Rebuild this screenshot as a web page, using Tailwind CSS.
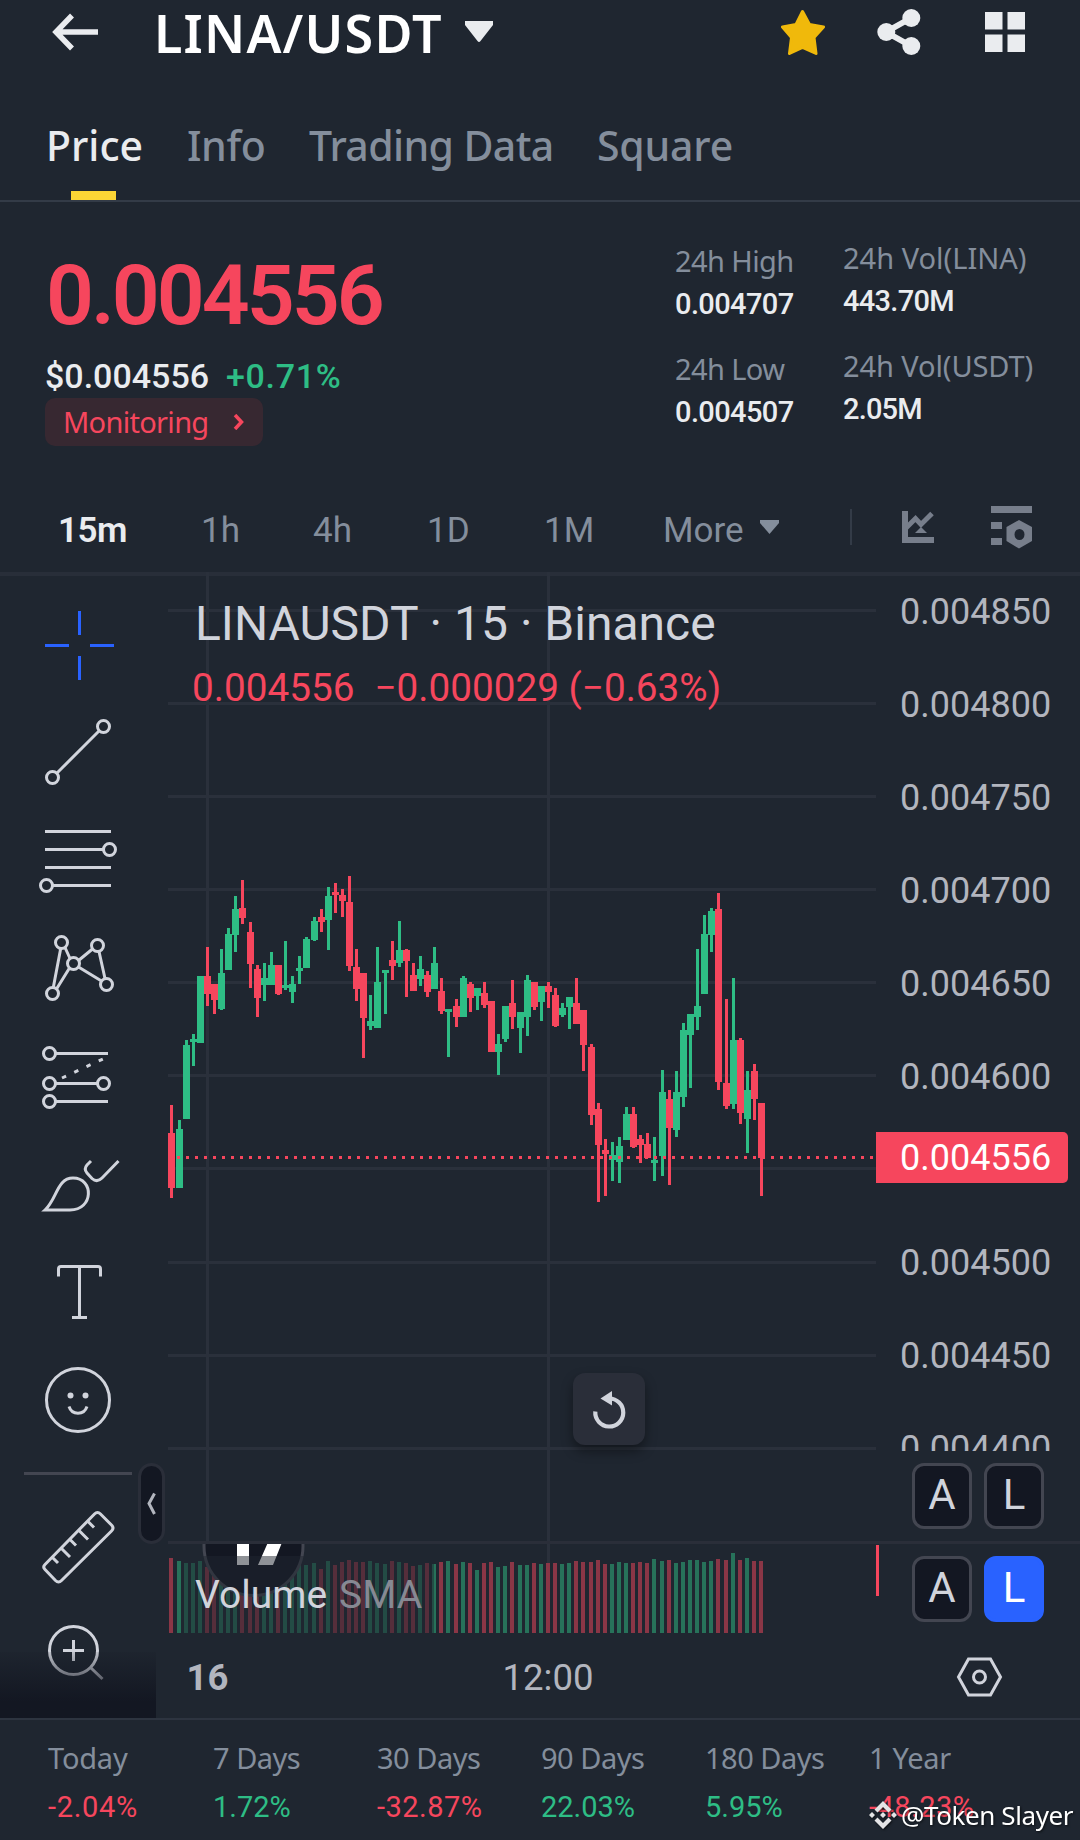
<!DOCTYPE html>
<html lang="en">
<head>
  <meta charset="UTF-8" />
  <title>LINA/USDT</title>
  <script src="https://cdn.jsdelivr.net/npm/@tailwindcss/browser@4"></script>
</head>
<body class="bg-[#1f2630] w-[1080px] h-[1840px] overflow-hidden font-['Roboto',sans-serif] text-[#eaecef] whitespace-nowrap">

  <!-- Header -->
  <header class="h-[68px] flex items-center font-['Noto_Sans',sans-serif]">
    <svg class="ml-[50px] w-[50px] h-[50px] -mt-1" viewBox="50 7 50 50" fill="none" stroke="#eaecef" stroke-width="5.5">
      <path d="M98 32H57M72 15.500L56 32L72 48.500" />
    </svg>
    <h1 class="ml-[54px] -mt-[2px] w-[292px] text-[52px] leading-[68px] font-semibold text-white tracking-[1.2px]">LINA/USDT</h1>
    <svg class="ml-[19px] w-[28px] h-[22px] -mt-1" viewBox="0 0 28 22" fill="#eaecef"><path d="M0 0H28V4L15.500 20Q14 22 12.500 20L0 4Z" /></svg>
    <svg class="ml-[288px] w-[44px] h-[46px] -mt-1" viewBox="781 9 44 46" fill="#f0b90b" stroke="#f0b90b" stroke-width="3" stroke-linejoin="round">
      <path d="M802.500 11.500L809.500 24.500L823.500 27L814 37.500L816 53.500L802.500 47.500L789.500 53.500L791.500 37.500L782.500 27L796 24.500Z" />
    </svg>
    <svg class="ml-[52px] w-[44px] h-[46px] -mt-1" viewBox="877 9 44 46" fill="#eaecef">
      <circle cx="886.300" cy="32" r="9" /><circle cx="911.300" cy="18" r="9" /><circle cx="911.300" cy="46" r="9" />
      <path d="M911 18L886 32L911 46" fill="none" stroke="#eaecef" stroke-width="6" />
    </svg>
    <svg class="ml-[64px] w-[40px] h-[40px] -mt-1" viewBox="0 0 40 40" fill="#eaecef">
      <path d="M0 0H17.500V17.500H0ZM22.500 0H40V17.500H22.500ZM0 22.500H17.500V40H0ZM22.500 22.500H40V40H22.500Z" />
    </svg>
  </header>

  <!-- Tabs -->
  <nav class="relative h-[134px] border-b-2 border-[#333b47] pl-[46px] grid grid-cols-[141px_122px_288px_160px] font-['Noto_Sans',sans-serif] text-[41px] leading-[56px] pt-[49px] font-medium text-[#848e9c]">
    <span class="text-[#eaecef]">Price</span>
    <span class="tracking-[-0.4px]">Info</span>
    <span class="tracking-[-0.6px]">Trading Data</span>
    <span class="tracking-[-0.2px]">Square</span>
    <i class="absolute left-[71px] bottom-0 w-[45px] h-[9px] bg-[#fcd535]"></i>
  </nav>

  <!-- Ticker -->
  <section class="h-[284px] flex">
    <div class="w-[676px] pt-[52px] pl-[45px]">
      <div class="pl-[1px] text-[84px] leading-[84px] font-semibold text-[#f6465d] tracking-[-3px]">0.004556</div>
      <div class="mt-4 h-[44px] text-[34px] leading-[44px] font-medium flex">
        <span class="w-[181px]">$0.004556</span>
        <span class="text-[#2ebd85] tracking-[0.7px]">+0.71%</span>
      </div>
      <div class="w-[218px] h-[48px] rounded-[10px] bg-[#372831] text-[#f6465d] pl-[18px] flex items-center font-['Noto_Sans',sans-serif] text-[29px] tracking-[-0.7px]">
        <span class="w-[170px]">Monitoring</span>
        <svg class="w-[11px] h-[16px]" viewBox="0 0 11 16" fill="none" stroke="#f6465d" stroke-width="3.500"><path d="M2 1L8.500 8L2 15" /></svg>
      </div>
    </div>
    <div class="w-[168px] pt-[41px] text-[29px] leading-[36px] tracking-[-0.6px]">
      <div class="-ml-px font-['Noto_Sans',sans-serif] text-[#848e9c]">24h High</div>
      <div class="mt-[7px] -ml-px font-medium">0.004707</div>
      <div class="mt-[29px] -ml-px font-['Noto_Sans',sans-serif] text-[#848e9c]">24h Low</div>
      <div class="mt-[7px] -ml-px font-medium">0.004507</div>
    </div>
    <div class="pt-[38px] -ml-px text-[29px] leading-[36px]">
      <div class="font-['Noto_Sans',sans-serif] text-[#848e9c]">24h Vol(LINA)</div>
      <div class="mt-[7px] font-medium tracking-[-0.7px]">443.70M</div>
      <div class="mt-[29px] font-['Noto_Sans',sans-serif] text-[#848e9c] tracking-[-0.1px]">24h Vol(USDT)</div>
      <div class="mt-[7px] font-medium tracking-[-0.8px]">2.05M</div>
    </div>
  </section>

  <!-- Intervals -->
  <nav class="h-[90px] border-b-4 border-[#282e39] pl-[58px] flex items-center text-[35px] leading-[44px] text-[#848e9c]">
    <span class="mt-1 w-[143px] font-semibold text-[#eaecef] tracking-[-0.5px]">15m</span>
    <span class="mt-1 w-[112px]">1h</span>
    <span class="mt-1 w-[114px]">4h</span>
    <span class="mt-1 w-[117px]">1D</span>
    <span class="mt-1 w-[119px]">1M</span>
    <span class="mt-1 w-[97px]">More</span>
    <svg class="w-[19px] h-[14px] -mt-1" viewBox="0 0 19 14" fill="#848e9c"><path d="M0 0H19V3L9.500 14L0 3Z" /></svg>
    <i class="ml-[71px] w-[2px] h-[36px] bg-[#333b47] -mt-1"></i>
    <svg class="ml-[50px] w-[32px] h-[32px] -mt-1" viewBox="0 0 32 32" fill="#777e8b">
      <path d="M0 0H6V26H32V32H0Z" /><path d="M13 22L19 16L25 22Z" />
      <path d="M4 17L13.500 7.500L19 13.500L30 2.500" fill="none" stroke="#777e8b" stroke-width="5" />
    </svg>
    <svg class="ml-[57px] w-[41px] h-[43px] -mt-[3px]" viewBox="0 0 41 43" fill="#777e8b">
      <path d="M0 0H41V7H0ZM0 16H11V23H0ZM0 32H11V39H0Z" />
      <path fill-rule="evenodd" d="M28 14L41 21V35L28 42.500L15.500 35V21ZM28.500 23A5 5.500 0 1 0 28.500 34A5 5.500 0 1 0 28.500 23Z" />
    </svg>
  </nav>

  <!-- Chart -->
  <section class="h-[1142px] flex">

    <!-- Drawing tools -->
    <aside class="relative w-[168px] h-[1142px] pt-4 overflow-hidden">
      <svg class="block w-[156px] h-[108px]" viewBox="0 592 156 108" stroke="#2962ff" stroke-width="3"><path d="M45 645.500H69M90 645.500H114M79.500 611V635M79.500 656V680" /></svg>
      <svg class="block w-[156px] h-[108px]" viewBox="0 700 156 108" fill="none" stroke="#d1d4dc" stroke-width="3">
        <circle cx="52.500" cy="777.500" r="6" /><circle cx="103.500" cy="726.500" r="6" /><path d="M57 773L99 731" />
      </svg>
      <svg class="block w-[156px] h-[108px]" viewBox="0 808 156 108" fill="none" stroke="#d1d4dc" stroke-width="3">
        <path d="M45 831.500H111M45 849.500H103M45 867.500H111M53 885.500H111" /><circle cx="109.500" cy="849.500" r="6" /><circle cx="46.500" cy="885.500" r="6" />
      </svg>
      <svg class="block w-[156px] h-[108px]" viewBox="0 916 156 108" fill="none" stroke="#d1d4dc" stroke-width="3">
        <path d="M60.700 948.500L53.300 987.500M65 947.500L70 958.500M56.500 989L69.500 968M78.500 960.500L92.500 949M99 951.500L105 978.500M78.500 967L101.500 981" />
        <circle cx="61.500" cy="942.500" r="6" /><circle cx="97.500" cy="945.500" r="6" /><circle cx="73.500" cy="963.500" r="6" /><circle cx="106.500" cy="984.500" r="6" /><circle cx="52.500" cy="993.500" r="6" />
      </svg>
      <svg class="block w-[156px] h-[108px]" viewBox="0 1024 156 108" fill="none" stroke="#d1d4dc" stroke-width="3">
        <circle cx="49.500" cy="1053.500" r="6" /><circle cx="49.500" cy="1083.500" r="6" /><circle cx="103.500" cy="1083.500" r="6" /><circle cx="49.500" cy="1101.500" r="6" />
        <path d="M56 1053.500H108M56 1083.500H97M56 1101.500H108" /><path d="M62 1078L104 1058.500" stroke-dasharray="4.500 9" />
      </svg>
      <svg class="block w-[156px] h-[108px]" viewBox="0 1132 156 108" fill="none" stroke="#d1d4dc" stroke-width="3">
        <path d="M45 1210C57 1199 57 1178 73 1178C94 1178 94 1210 70 1210Z" /><path d="M91 1161L87 1165Q83.500 1169 87 1173L92 1178.500Q97 1183 102 1178L118.500 1161" />
      </svg>
      <svg class="block w-[156px] h-[108px]" viewBox="0 1240 156 108" fill="none" stroke="#d1d4dc" stroke-width="3">
        <path d="M58.500 1276.500V1269Q58.500 1266.500 61 1266.500H98Q100.500 1266.500 100.500 1269V1276.500M79.500 1266V1317M72 1317.500H87" />
      </svg>
      <svg class="block w-[156px] h-[108px]" viewBox="0 1348 156 108" fill="none" stroke="#d1d4dc" stroke-width="3">
        <circle cx="78" cy="1400" r="31.500" /><path d="M69 1406.500C72 1415.500 84 1415.500 87 1406.500" />
        <g fill="#d1d4dc" stroke="none"><circle cx="70.500" cy="1395.500" r="3" /><circle cx="85.500" cy="1395.500" r="3" /></g>
      </svg>
      <hr class="mt-4 ml-6 w-[108px] border-0 h-[3px] bg-[#434651]" />
      <svg class="block mt-[15px] w-[156px] h-[108px]" viewBox="0 1490 156 108" fill="none" stroke="#d1d4dc" stroke-width="3">
        <path d="M45 1564.500L94.500 1514Q97.500 1511 100.500 1514L111.500 1525Q114.500 1528 111.500 1531L61.500 1580.500Q58.500 1583.500 55.500 1580.500L45 1569.500Q42.500 1567 45 1564.500Z" />
        <path d="M52 1557L58 1563M61 1548L70 1557M70 1539.500L76 1545.500M79 1530.500L88 1539.500M88 1521.500L94 1527.500" />
      </svg>
      <svg class="block w-[156px] h-[108px]" viewBox="0 1598 156 108" fill="none" stroke="#d1d4dc" stroke-width="3">
        <circle cx="73.500" cy="1650.500" r="24" /><path d="M63 1650.500H84M73.500 1640V1661M91 1668L102.500 1679" />
      </svg>
      <div class="absolute left-0 bottom-0 w-[156px] h-[66px] bg-linear-to-b from-[#131722]/10 to-[#131722] to-75%"></div>
      <div class="absolute left-[138px] top-[887px] w-[27px] h-[81px] rounded-full border-3 border-[#2a2e39] bg-[#131722]">
        <svg class="w-[21px] h-[75px]" viewBox="141 1466 21 75" fill="none" stroke="#b2b5be" stroke-width="3"><path d="M154.500 1493.500L149 1503.500L154.500 1514" /></svg>
      </div>
    </aside>

    <div class="relative w-[912px]">
      <svg id="chart" class="absolute left-0 top-0 w-[912px] h-[1067px] overflow-visible" viewBox="168 576 912 1067" shape-rendering="crispEdges"></svg>

      <div class="relative h-[1067px] flex">
        <!-- Plot with legends -->
        <div class="w-[708px] pt-[20px] pl-[27px]">
          <div class="text-[48px] leading-[56px] text-[#d1d4dc]">LINAUSDT · 15 · Binance</div>
          <div class="mt-[8px] -ml-[3px] text-[38.7px] leading-[56px] text-[#f6465d] flex gap-[20px]"><span>0.004556</span><span>−0.000029 (−0.63%)</span></div>
          <button class="block mt-[657px] ml-[378px] w-[72px] h-[72px] rounded-xl bg-[#2a2e39] shadow-[0_6px_12px_rgba(0,0,0,0.4)]">
            <svg class="w-[72px] h-[72px]" viewBox="573 1373 72 72">
              <path d="M595.300 1411.500A14 14 0 1 0 609 1398.500" fill="none" stroke="#d1d4dc" stroke-width="4.200" /><path d="M600.500 1398.500L612 1391V1405.500Z" fill="#d1d4dc" />
            </svg>
          </button>
          <div class="mt-[127px] text-[39px] leading-[46px] text-[#d1d4dc] flex gap-[12px]"><span>Volume</span><span class="text-[#868993]">SMA</span></div>
        </div>

        <!-- Price scale -->
        <div class="relative w-[204px] text-[#b2b5be] text-[36px]">
          <div id="scale" class="h-[875px] overflow-hidden pl-[24px]"></div>
          <div class="absolute left-0 top-[556px] w-[192px] h-[51px] rounded-r-[5px] bg-[#f6465d] text-white pl-[24px] leading-[53px]">0.004556</div>
          <div class="mt-3 pl-9 grid grid-cols-[60px_60px] gap-x-3 gap-y-[27px] text-[42px] text-[#d1d4dc] text-center leading-[57px]">
            <button class="h-[66px] pb-[3px] rounded-xl border-3 border-[#434651] bg-[#131722]">A</button>
            <button class="h-[66px] pb-[3px] rounded-xl border-3 border-[#434651] bg-[#131722]">L</button>
            <button class="h-[66px] pb-[3px] rounded-xl border-3 border-[#434651] bg-[#131722]">A</button>
            <button class="h-[66px] pb-[3px] rounded-xl border-3 border-[#2962ff] bg-[#2962ff] text-white">L</button>
          </div>
        </div>
      </div>

      <!-- Time scale -->
      <div class="h-[69px] flex items-center text-[36.5px] text-[#b2b5be]">
        <span class="mt-[2px] w-[79px] text-center font-bold">16</span>
        <span class="mt-[2px] ml-[216px] w-[170px] text-center">12:00</span>
        <svg class="ml-[322px] w-[48px] h-[42px] -mt-[2px]" viewBox="955 1656.500 48 42" fill="none" stroke="#d1d4dc" stroke-width="3">
          <path d="M968.500 1659.500H990.500L1000.500 1677.500L990.500 1695.500H968.500L958.500 1677.500Z" /><circle cx="979.500" cy="1677.500" r="6" />
        </svg>
      </div>
    </div>
  </section>

  <!-- Performance -->
  <footer class="relative h-[122px] border-t-2 border-[#2d3440] pt-[18px] pl-[48px] grid grid-cols-[165px_164px_164px_164px_164px_180px] auto-rows-[49px] text-[29px] leading-[40px]">
    <span class="font-['Noto_Sans',sans-serif] text-[#848e9c] tracking-[-0.2px]">Today</span>
    <span class="font-['Noto_Sans',sans-serif] text-[#848e9c] tracking-[-0.5px]">7 Days</span>
    <span class="font-['Noto_Sans',sans-serif] text-[#848e9c] tracking-[-0.5px]">30 Days</span>
    <span class="font-['Noto_Sans',sans-serif] text-[#848e9c] tracking-[-0.5px]">90 Days</span>
    <span class="font-['Noto_Sans',sans-serif] text-[#848e9c] tracking-[-0.5px]">180 Days</span>
    <span class="font-['Noto_Sans',sans-serif] text-[#848e9c] tracking-[-0.3px]">1 Year</span>
    <span class="text-[#f6465d] tracking-[0.7px]">-2.04%</span>
    <span class="text-[#2ebd85]">1.72%</span>
    <span class="text-[#f6465d] tracking-[0.5px]">-32.87%</span>
    <span class="text-[#2ebd85]">22.03%</span>
    <span class="text-[#2ebd85]">5.95%</span>
    <span class="text-[#f6465d] tracking-[0.5px]">-48.23%</span>
    <div class="absolute left-[869px] top-[77px] flex items-center gap-[4px] font-['Noto_Sans',sans-serif] text-[26px] leading-[36px] tracking-[-0.4px] text-white drop-shadow-[1px_1px_1px_rgba(0,0,0,0.6)]">
      <svg class="w-[28px] h-[28px]" viewBox="0 0 28 28" fill="#e4e4e6">
        <path d="M14 0L22.500 8.500L19.500 11.500L14 6L8.500 11.500L5.500 8.500ZM14 28L22.500 19.500L19.500 16.500L14 22L8.500 16.500L5.500 19.500ZM14 11L17 14L14 17L11 14ZM3 11L6 14L3 17L0 14ZM25 11L28 14L25 17L22 14Z" />
      </svg>
      <span>@Token Slayer</span>
    </div>
  </footer>

  <script>
    // up/down, high, body top, body bottom, low, volume top
    const candles = [
      ["R",1105,1133,1188,1198,1558],["G",1120,1129,1188,1188,1561],["G",1040,1045,1119,1119,1563],["G",1034,1039,1042,1066,1563],
      ["G",976,976,1043,1043,1561],["R",947,976,994,1006,1567],["R",984,984,1000,1014,1564],["G",949,973,1009,1010,1562],
      ["G",928,934,970,970,1563],["G",896,909,935,952,1563],["R",880,908,918,924,1562],["R",922,932,964,988,1563],
      ["R",965,969,998,1017,1564],["G",963,978,985,1001,1563],["G",952,965,985,985,1562],["R",965,965,994,995,1563],
      ["G",941,985,988,990,1564],["G",976,984,992,1003,1563],["G",956,968,971,984,1563],["G",937,939,968,968,1565],
      ["G",917,921,940,941,1563],["R",909,917,922,932,1569],["G",887,896,920,950,1561],["R",883,892,895,913,1565],
      ["R",889,895,901,917,1562],["R",876,902,966,971,1560],["R",949,967,989,1001,1562],["R",973,973,1018,1058,1562],
      ["G",995,1021,1026,1030,1561],["G",947,982,1028,1028,1563],["G",970,970,973,1014,1564],["R",941,960,966,980,1561],
      ["G",921,950,963,967,1562],["R",949,950,961,997,1563],["R",963,975,991,991,1566],["G",956,969,979,986,1565],
      ["R",971,975,992,997,1563],["G",947,963,989,989,1564],["R",978,991,1011,1014,1562],["G",1009,1009,1012,1057,1561],
      ["R",999,1006,1017,1027,1564],["G",976,978,1017,1017,1562],["R",982,984,998,1012,1563],["G",988,988,996,1010,1570],
      ["R",982,993,1005,1008,1563],["R",1001,1001,1052,1052,1562],["G",1034,1044,1052,1075,1567],["G",1006,1006,1039,1042,1566],
      ["R",980,1003,1017,1029,1562],["G",1012,1012,1028,1053,1565],["G",975,980,1017,1036,1565],["R",982,982,1007,1010,1563],
      ["G",986,986,1002,1021,1564],["R",982,986,992,1008,1563],["R",988,995,1026,1027,1563],["G",1003,1008,1015,1017,1564],
      ["G",997,997,1007,1029,1563],["R",978,1003,1024,1024,1561],["R",1010,1010,1045,1071,1562],["R",1044,1047,1115,1125,1562],
      ["R",1103,1109,1145,1202,1560],["R",1139,1150,1154,1196,1564],["G",1142,1155,1160,1181,1564],["G",1137,1146,1162,1183,1562],
      ["G",1107,1114,1140,1140,1563],["R",1107,1114,1147,1148,1563],["R",1135,1139,1145,1163,1562],["R",1133,1144,1158,1158,1563],
      ["G",1137,1160,1163,1181,1559],["G",1070,1092,1156,1176,1561],["R",1090,1099,1128,1185,1560],["G",1071,1092,1130,1137,1563],
      ["G",1023,1030,1097,1107,1562],["G",1014,1014,1035,1088,1560],["G",949,1006,1017,1030,1560],["G",915,934,994,994,1562],
      ["G",908,911,935,952,1561],["R",893,909,1082,1090,1559],["R",999,1083,1106,1109,1560],["G",978,1040,1104,1109,1553],
      ["R",1038,1040,1113,1124,1560],["G",1071,1090,1119,1153,1558],["R",1064,1071,1099,1120,1561],["R",1103,1103,1158,1196,1561]
    ];
    // left edge of each candle
    const xs = [168,176,183,190,197,204,211,218,225,232,239,247,254,261,268,275,282,289,296,303,311,318,325,332,339,346,353,360,367,374,382,389,396,403,410,417,424,431,438,445,453,460,467,474,481,488,495,502,509,517,524,531,538,545,552,559,566,573,580,588,595,602,609,616,623,630,637,644,651,659,666,673,680,687,694,701,708,715,723,730,737,744,751,758];

    const rect = (x, y, w, h, fill) => `<rect x="${x}" y="${y}" width="${w}" height="${h}" fill="${fill}" />`;
    const color = { R: "#f6465d", G: "#2ebd85" };
    const volColor = { R: "#8a3646", G: "#27725a" };
    let out = "";

    // grid
    [609, 702, 795, 888, 981, 1074, 1167, 1261, 1354, 1447].forEach(y => out += rect(168, y, 708, 3, "#2a303b"));
    [206, 547].forEach(x => out += rect(x, 572, 3, 1061, "#2a303b"));
    out += rect(168, 1541, 912, 3, "#2a2e39");

    // volume
    candles.forEach((c, i) => out += rect(xs[i] + 1, c[5], 4, 1633 - c[5], volColor[c[0]]));

    // logo badge, cut by the pane edge
    out += `<g shape-rendering="auto"><clipPath id="pane"><rect x="168" y="1544" width="300" height="99" /></clipPath>
      <g clip-path="url(#pane)"><circle cx="253.5" cy="1546" r="49.5" fill="#131722" stroke="#434651" stroke-width="3" />
      <path d="M237 1540H249V1565H237ZM269 1540H283L273 1565H258Z" fill="#fff" /></g></g>`;
    out += rect(181, 1556, 253, 77, "rgba(31,38,48,0.5)");
    out += rect(876, 1545, 3, 51, "#f6465d");

    // candles
    candles.forEach((c, i) => {
      out += rect(xs[i] + 2, c[1], 3, c[4] - c[1], color[c[0]]);
      out += rect(xs[i], c[2], 7, c[3] - c[2], color[c[0]]);
    });

    // last price
    for (let x = 168; x < 876; x += 9) out += rect(x, 1156, 3, 3, color.R);
    document.getElementById("chart").innerHTML = out;

    const prices = ["0.004850", "0.004800", "0.004750", "0.004700", "0.004650", "0.004600", "", "0.004500", "0.004450", "0.004400"];
    document.getElementById("scale").innerHTML = `<div class="-mt-[11px]">` +
      prices.map(p => `<div class="h-[93.1px] flex items-center">${p}</div>`).join("") + `</div>`;
  </script>
</body>
</html>
